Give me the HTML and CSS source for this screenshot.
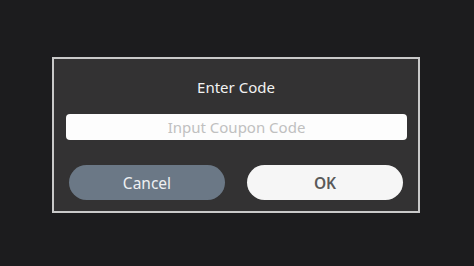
FILE: index.html
```html
<!DOCTYPE html>
<html lang="en">
<head>
    <meta charset="UTF-8">
    <meta name="viewport" content="width=device-width, initial-scale=1.0">
    <title>Enter Code</title>
    <link rel="stylesheet" href="styles.css">
</head>
<body>
    <div class="dialog">
        <h1 class="dialog-title">Enter Code</h1>
        <input class="code-input" type="text" placeholder="Input Coupon Code">
        <div class="actions">
            <button class="btn btn-cancel">Cancel</button>
            <button class="btn btn-ok">OK</button>
        </div>
    </div>
</body>
</html>
```

FILE: styles.css
```css
* {
    box-sizing: border-box;
    margin: 0;
    padding: 0;
    font-family: 'Noto Sans', 'Open Sans', sans-serif;
}

body {
    background-color: #1c1c1e;
    min-height: 100vh;
    padding: 57px 0 0 52px;
}

.dialog {
    width: 368px;
    height: 156px;
    background-color: #333233;
    border: 2px solid #c9c9c9;
    padding: 18px 12px 0 12px;
}

.dialog-title {
    color: #f2f2f2;
    font-size: 15px;
    font-weight: normal;
    line-height: 20px;
    text-align: center;
}

.code-input {
    display: block;
    width: 341px;
    height: 26px;
    margin-top: 17px;
    border: none;
    border-radius: 4px;
    background-color: #fdfdfd;
    text-align: center;
    font-size: 15px;
    outline: none;
}

.code-input::placeholder {
    color: #c0c0c0;
}

.actions {
    display: flex;
    gap: 22px;
    margin-top: 25px;
    padding: 0 3px;
}

.btn {
    width: 157px;
    height: 35px;
    border: none;
    border-radius: 18px;
    font-size: 15.5px;
    cursor: pointer;
}

.btn-cancel {
    background-color: #6b7886;
    color: #eef0f3;
}

.btn-ok {
    background-color: #f6f6f6;
    color: #5a5a5a;
    font-weight: 600;
}
```
